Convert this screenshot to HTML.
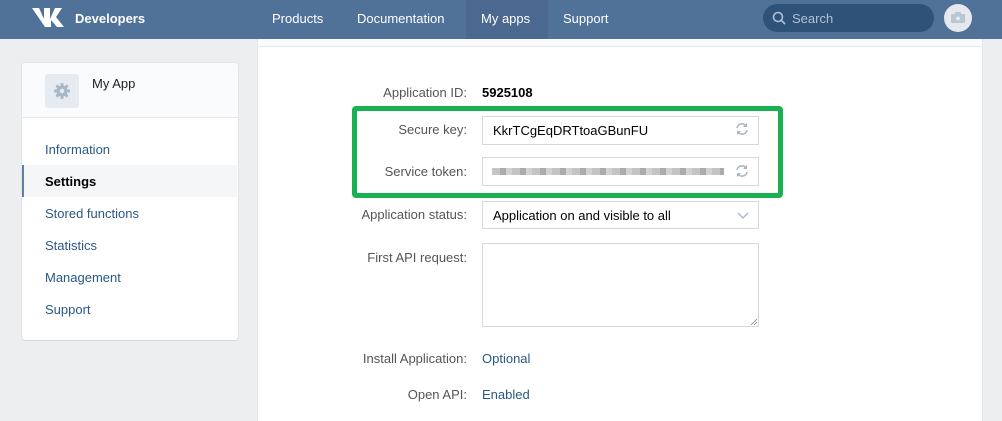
<!DOCTYPE html>
<html><head><meta charset="utf-8"><style>
*{box-sizing:border-box;margin:0;padding:0}
body{width:1002px;height:421px;overflow:hidden;background:#edeef0;font-family:"Liberation Sans",sans-serif;font-size:13px;color:#000;position:relative}
.hdr{position:absolute;left:0;top:0;width:1002px;height:39px;background:#507299}
.hdr .t{position:absolute;top:11px;color:#fff;font-size:13px}
.tab{position:absolute;top:0;height:39px;background:#4a6890}
.search{position:absolute;left:763px;top:4px;width:171px;height:28px;border-radius:14px;background:#2f5378}
.search span{position:absolute;left:29px;top:7px;color:#aec0d5;font-size:13px}
.av{position:absolute;left:944px;top:4px;width:28px;height:28px;border-radius:50%;background:#e5e9ee}
.panel{position:absolute;left:257px;top:39px;width:726px;height:382px;background:#fff;border-left:1px solid #e3e5e8;border-right:1px solid #e3e5e8}
.panel .strip{position:absolute;left:0;top:0;right:0;height:8px;background:#fafbfc;border-bottom:1px solid #e7e8ec}
.side{position:absolute;left:22px;top:63px;width:216px;height:277px;background:#fff;border-radius:3px;box-shadow:0 1px 0 #d7d8db,0 0 0 1px #e3e4e8}
.sh{height:55px;background:#fafbfc;border-bottom:1px solid #e7e8ec;position:relative;border-radius:3px 3px 0 0}
.gear{position:absolute;left:23px;top:11px;width:34px;height:34px;background:#e5ebf1;border-radius:3px}
.sh .n{position:absolute;left:70px;top:13px;font-size:13px;color:#222}
.mi{position:absolute;left:23px;font-size:13px;color:#2a5885}
.act{position:absolute;left:0;top:102px;width:215px;height:32px;background:#f5f6f8;border-left:2px solid #5e81a8}
.lbl{position:absolute;right:535px;color:#555;font-size:13px;text-align:right;white-space:nowrap}
.inp{position:absolute;left:482px;width:277px;background:#fff;border:1px solid #d3d9de}
.inp span{position:absolute;left:10px;top:6px;font-size:13px;color:#000}
.green{position:absolute;left:352px;top:106px;width:431px;height:92px;border:5px solid #1ab153;border-radius:4px}
.lnk{position:absolute;left:482px;color:#2a5885;font-size:13px}
</style></head><body>
<div class="hdr">
 <svg style="position:absolute;left:32px;top:8px" width="33" height="19" viewBox="0 0 33 19"><path d="M0 0h7l5 11V0h6v11l5-11h7l-6 9 8 10h-7l-6-7v7h-6L0 0z" fill="#fff"/></svg>
 <div class="t" style="left:75px;font-weight:bold">Developers</div>
 <div class="tab" style="left:466px;width:82px"></div>
 <div class="t" style="left:272px">Products</div>
 <div class="t" style="left:357px">Documentation</div>
 <div class="t" style="left:481px">My apps</div>
 <div class="t" style="left:563px">Support</div>
 <div class="search"><svg style="position:absolute;left:9px;top:7px" width="14" height="14" viewBox="0 0 14 14"><circle cx="6" cy="6" r="4.5" fill="none" stroke="#aec0d5" stroke-width="1.6"/><path d="M9.3 9.3L13 13" stroke="#aec0d5" stroke-width="1.7"/></svg><span>Search</span></div>
 <div class="av"><svg style="position:absolute;left:7px;top:8px" width="14" height="11" viewBox="0 0 14 11"><rect x="0" y="2" width="14" height="9" rx="1" fill="#b8c6d6"/><rect x="4" y="0" width="6" height="3" fill="#b8c6d6"/><circle cx="7" cy="6.5" r="2" fill="#e5e9ee"/></svg></div>
</div>
<div class="panel"><div class="strip"></div></div>
<div class="side">
 <div class="sh"><div class="gear"><svg style="position:absolute;left:9px;top:9px" width="16" height="16" viewBox="0 0 16 16"><g fill="#a8b6c6"><circle cx="8" cy="8" r="5.5"/><rect x="6.5" y="0" width="3" height="16" rx="1"/><rect x="0" y="6.5" width="16" height="3" rx="1"/><rect x="6.5" y="0" width="3" height="16" rx="1" transform="rotate(45 8 8)"/><rect x="6.5" y="0" width="3" height="16" rx="1" transform="rotate(-45 8 8)"/></g><circle cx="8" cy="8" r="2.2" fill="#e5ebf1"/></svg></div><div class="n">My App</div></div>
 <div class="act"></div>
 <div class="mi" style="top:79px">Information</div>
 <div class="mi" style="top:111px;color:#000;font-weight:bold">Settings</div>
 <div class="mi" style="top:143px">Stored functions</div>
 <div class="mi" style="top:175px">Statistics</div>
 <div class="mi" style="top:207px">Management</div>
 <div class="mi" style="top:239px">Support</div>
</div>
<div class="lbl" style="top:85px">Application ID:</div>
<div style="position:absolute;left:482px;top:85px;font-weight:bold">5925108</div>
<div class="green"></div>
<div class="lbl" style="top:122px">Secure key:</div>
<div class="inp" style="top:116px;height:29px"><span>KkrTCgEqDRTtoaGBunFU</span></div>
<div class="lbl" style="top:164px">Service token:</div>
<div class="inp" style="top:157px;height:29px"><div style="position:absolute;left:9px;top:10px;width:232px;height:7px;background:repeating-linear-gradient(90deg,#c4c4c4 0 8px,#ababab 8px 14px,#d2d2d2 14px 20px)"></div></div>
<svg style="position:absolute;left:734px;top:121px" width="16" height="16" viewBox="0 0 16 16"><path d="M3 7a5 5 0 0 1 9-2M13 9a5 5 0 0 1-9 2" fill="none" stroke="#a7b4c2" stroke-width="1.5"/><path d="M13 2v4h-4zM3 14v-4h4z" fill="#a7b4c2"/></svg>
<svg style="position:absolute;left:734px;top:163px" width="16" height="16" viewBox="0 0 16 16"><path d="M3 7a5 5 0 0 1 9-2M13 9a5 5 0 0 1-9 2" fill="none" stroke="#a7b4c2" stroke-width="1.5"/><path d="M13 2v4h-4zM3 14v-4h4z" fill="#a7b4c2"/></svg>
<div class="lbl" style="top:207px">Application status:</div>
<div class="inp" style="top:201px;height:28px"><span style="top:6px">Application on and visible to all</span><svg style="position:absolute;left:254px;top:10px" width="12" height="8" viewBox="0 0 12 8"><path d="M1 1l5 5 5-5" fill="none" stroke="#a7b4c2" stroke-width="1.3"/></svg></div>
<div class="lbl" style="top:250px">First API request:</div>
<div class="inp" style="top:243px;height:84px"><svg style="position:absolute;right:1px;bottom:1px" width="7" height="7" viewBox="0 0 7 7"><path d="M1 7L7 1M4 7L7 4" stroke="#888" stroke-width="0.8"/></svg></div>
<div class="lbl" style="top:351px">Install Application:</div>
<div class="lnk" style="top:351px">Optional</div>
<div class="lbl" style="top:387px">Open API:</div>
<div class="lnk" style="top:387px">Enabled</div>
</body></html>
